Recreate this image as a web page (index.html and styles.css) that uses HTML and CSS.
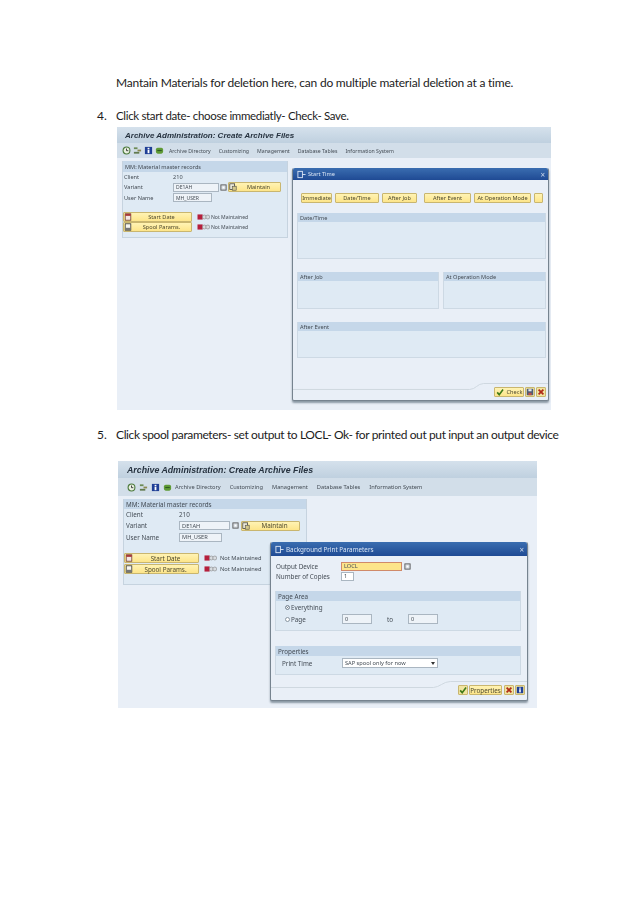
FILE: index.html
```html
<!DOCTYPE html>
<html lang="en">
<head>
<meta charset="utf-8">
<title>Archive Administration notes</title>
<link rel="stylesheet" href="styles.css">
</head>
<body>
<svg class="defs" width="0" height="0" aria-hidden="true">
  <symbol id="i-clock" viewBox="0 0 10 10"><circle cx="5" cy="5" r="3.8" fill="#e8efe0" stroke="#4c7a3c" stroke-width="1.2"/><path d="M5 2.8V5.2H7" fill="none" stroke="#333" stroke-width="1"/></symbol>
  <symbol id="i-tree" viewBox="0 0 10 10"><rect x="1" y="1.5" width="4" height="2" fill="#6d8a55"/><rect x="5" y="4" width="4" height="2" fill="#8c8a50"/><rect x="1" y="6.5" width="6" height="2" fill="#62794e"/></symbol>
  <symbol id="i-info" viewBox="0 0 10 10"><rect x="1" y="1" width="8" height="8" fill="#1f3f96"/><rect x="4" y="2" width="2" height="1.4" fill="#fff"/><rect x="4" y="4" width="2" height="4" fill="#fff"/></symbol>
  <symbol id="i-db" viewBox="0 0 10 10"><rect x="1" y="2" width="8" height="6.5" rx="2" fill="#5f9a35"/><rect x="2.5" y="4.4" width="5" height="1.2" fill="#2e5a20"/></symbol>
  <symbol id="i-cal" viewBox="0 0 10 10"><rect x="1.5" y="1" width="7" height="8" fill="#f3e8e4" stroke="#6b3a34"/><rect x="1.5" y="1" width="7" height="2.6" fill="#a83a3a"/></symbol>
  <symbol id="i-page" viewBox="0 0 10 10"><rect x="1.5" y="1" width="7" height="8" fill="#f6f6f0" stroke="#333"/><rect x="1.5" y="6" width="7" height="3" fill="#777"/></symbol>
  <symbol id="i-status" viewBox="0 0 15 7"><rect x="0.5" y="0.5" width="6" height="6" fill="#b51f3c"/><circle cx="8.5" cy="3.5" r="2.3" fill="#d8dce0" stroke="#777" stroke-width=".6"/><circle cx="12.5" cy="3.5" r="2.3" fill="#d8dce0" stroke="#777" stroke-width=".6"/></symbol>
  <symbol id="i-match" viewBox="0 0 8 8"><rect x="1" y="1" width="6" height="6" fill="#d6dce2" stroke="#555"/><rect x="3" y="3" width="2" height="2" fill="#fff"/></symbol>
  <symbol id="i-variant" viewBox="0 0 10 10"><rect x="1" y="1" width="6" height="7" fill="#f1efe0" stroke="#444"/><rect x="4" y="4" width="5" height="5" fill="#d4c88a" stroke="#444" stroke-width=".7"/></symbol>
  <symbol id="i-check" viewBox="0 0 10 10"><path d="M1.5 5.5L4 8.3L8.8 1.8" fill="none" stroke="#3f7a18" stroke-width="2"/></symbol>
  <symbol id="i-save" viewBox="0 0 10 10"><rect x="1" y="1" width="8" height="8" fill="#4d5d78"/><rect x="3" y="1.5" width="4" height="2.6" fill="#e5e8ee"/><rect x="3" y="6" width="4" height="3" fill="#b9504a"/></symbol>
  <symbol id="i-x" viewBox="0 0 10 10"><path d="M2 2L8 8M8 2L2 8" stroke="#b02a18" stroke-width="2.2"/></symbol>
  <symbol id="i-dlg" viewBox="0 0 10 10"><rect x="1" y="1.5" width="5" height="7" fill="none" stroke="#dce6f5"/><path d="M6 5H9.5" stroke="#dce6f5"/></symbol>
</svg>

<main class="page">
  <p class="intro">Mantain Materials for deletion here, can do multiple material deletion at a time.</p>

  <p class="step step-four"><span class="num">4.</span><span>Click start date- choose immediatly- Check- Save.</span></p>

  <section class="screen screen-a">
    <header class="title">Archive Administration: Create Archive Files</header>
    <nav class="toolbar">
      <span class="tools">
        <svg class="ico"><use href="#i-clock"/></svg><svg class="ico"><use href="#i-tree"/></svg><svg class="ico"><use href="#i-info"/></svg><svg class="ico"><use href="#i-db"/></svg>
      </span>
      <span>Archive Directory</span><span>Customizing</span><span>Management</span><span>Database Tables</span><span>Information System</span>
    </nav>
    <div class="work">
      <section class="panel">
        <h3 class="group-head">MM: Material master records</h3>
        <div class="fields">
          <div class="row"><span class="lab">Client</span><span>210</span></div>
          <div class="row"><span class="lab">Variant</span><span class="input in-variant">DE1AH</span><svg class="match"><use href="#i-match"/></svg><span class="btn btn-maintain"><svg class="ico"><use href="#i-variant"/></svg><b>Maintain</b></span></div>
          <div class="row"><span class="lab">User Name</span><span class="input in-user">MH_USER</span></div>
        </div>
        <div class="actions">
          <div class="row"><span class="btn btn-action"><svg class="ico"><use href="#i-cal"/></svg><b>Start Date</b></span><svg class="status"><use href="#i-status"/></svg><span>Not Maintained</span></div>
          <div class="row"><span class="btn btn-action"><svg class="ico"><use href="#i-page"/></svg><b>Spool Params.</b></span><svg class="status"><use href="#i-status"/></svg><span>Not Maintained</span></div>
        </div>
      </section>
    </div>

    <section class="dialog dialog-a">
      <header class="dlg-title"><svg class="ico"><use href="#i-dlg"/></svg><span>Start Time</span><i class="dlg-close">×</i></header>
      <div class="dlg-body">
        <div class="btn-row">
          <span class="btn b-imm">Immediate</span><span class="btn b-date">Date/Time</span><span class="btn b-job">After Job</span><span class="btn b-event">After Event</span><span class="btn b-mode">At Operation Mode</span><span class="btn b-blank"></span>
        </div>
        <section class="box box-date"><h4 class="group-head">Date/Time</h4></section>
        <div class="box-pair">
          <section class="box box-job"><h4 class="group-head">After Job</h4></section>
          <section class="box box-job"><h4 class="group-head">At Operation Mode</h4></section>
        </div>
        <section class="box box-event"><h4 class="group-head">After Event</h4></section>
      </div>
      <footer class="dlg-foot">
        <svg class="foot-line" viewBox="0 0 257 8" aria-hidden="true"><path d="M0 6.5H178C184 6.5 186 .5 192 .5H257" fill="none" stroke="#cfd8e0"/></svg>
        <span class="btn btn-check"><svg class="ico"><use href="#i-check"/></svg>Check</span>
        <span class="btn btn-icon"><svg class="ico"><use href="#i-save"/></svg></span>
        <span class="btn btn-icon"><svg class="ico"><use href="#i-x"/></svg></span>
      </footer>
    </section>
  </section>

  <p class="step step-five"><span class="num">5.</span><span>Click spool parameters- set output to LOCL- Ok- for printed out put input an output device</span></p>

  <section class="screen screen-b">
    <header class="title">Archive Administration: Create Archive Files</header>
    <nav class="toolbar">
      <span class="tools">
        <svg class="ico"><use href="#i-clock"/></svg><svg class="ico"><use href="#i-tree"/></svg><svg class="ico"><use href="#i-info"/></svg><svg class="ico"><use href="#i-db"/></svg>
      </span>
      <span>Archive Directory</span><span>Customizing</span><span>Management</span><span>Database Tables</span><span>Information System</span>
    </nav>
    <div class="work">
      <section class="panel">
        <h3 class="group-head">MM: Material master records</h3>
        <div class="fields">
          <div class="row"><span class="lab">Client</span><span>210</span></div>
          <div class="row"><span class="lab">Variant</span><span class="input in-variant">DE1AH</span><svg class="match"><use href="#i-match"/></svg><span class="btn btn-maintain"><svg class="ico"><use href="#i-variant"/></svg><b>Maintain</b></span></div>
          <div class="row"><span class="lab">User Name</span><span class="input in-user">MH_USER</span></div>
        </div>
        <div class="actions">
          <div class="row"><span class="btn btn-action"><svg class="ico"><use href="#i-cal"/></svg><b>Start Date</b></span><svg class="status"><use href="#i-status"/></svg><span>Not Maintained</span></div>
          <div class="row"><span class="btn btn-action"><svg class="ico"><use href="#i-page"/></svg><b>Spool Params.</b></span><svg class="status"><use href="#i-status"/></svg><span>Not Maintained</span></div>
        </div>
      </section>
    </div>

    <section class="dialog dialog-b">
      <header class="dlg-title"><svg class="ico"><use href="#i-dlg"/></svg><span>Background Print Parameters</span><i class="dlg-close">×</i></header>
      <div class="dlg-body">
        <div class="form-row"><span class="dlab">Output Device</span><span class="input in-locl">LOCL</span><svg class="match"><use href="#i-match"/></svg></div>
        <div class="form-row"><span class="dlab">Number of Copies</span><span class="input in-copies">1</span></div>
        <section class="box box-area">
          <h4 class="group-head">Page Area</h4>
          <div class="radio-row"><span class="radio on"></span><span>Everything</span></div>
          <div class="radio-row"><span class="radio"></span><span class="page-lab">Page</span><span class="input in-page">0</span><span class="to">to</span><span class="input in-page">0</span></div>
        </section>
        <section class="box box-props">
          <h4 class="group-head">Properties</h4>
          <div class="props-row"><span class="dlab">Print Time</span><span class="input in-select">SAP spool only for now<i class="caret"></i></span></div>
        </section>
      </div>
      <footer class="dlg-foot">
        <svg class="foot-line" viewBox="0 0 257 8" aria-hidden="true"><path d="M0 6.5H163C169 6.5 173 .5 180 .5H257" fill="none" stroke="#cfd8e0"/></svg>
        <span class="btn btn-icon"><svg class="ico"><use href="#i-check"/></svg></span>
        <span class="btn btn-props">Properties</span>
        <span class="btn btn-icon"><svg class="ico"><use href="#i-x"/></svg></span>
        <span class="btn btn-icon"><svg class="ico"><use href="#i-info"/></svg></span>
      </footer>
    </section>
  </section>
</main>
</body>
</html>
```

FILE: styles.css
```css
* { box-sizing: border-box; }
html, body { margin: 0; padding: 0; background: #fff; }
.defs { position: absolute; }
.page { width: 638px; height: 902px; overflow: hidden; padding-top: 75px; font-family: Lato, "Open Sans", sans-serif; color: #1c1c1c; font-size: 12px; letter-spacing: -.22px; font-variant-ligatures: none; }
p { margin: 0; line-height: 16px; }
.intro { margin-left: 116px; }
.step { display: flex; margin-left: 97px; }
.num { width: 19px; letter-spacing: 0; font-size: 12px; flex: none; }
.step-four { margin-top: 17px; font-size: 11.5px; letter-spacing: -.34px; }
.step-five { margin-top: 17px; letter-spacing: -.38px; }

.screen { position: relative; display: flex; flex-direction: column; background: #e9eff7; color: #444c55; font-family: "Noto Sans", sans-serif; letter-spacing: 0; filter: blur(.65px); }
.screen-a { width: 434px; height: 283px; margin: 3px 0 0 117px; font-size: 5.6px; }
.screen-b { width: 419px; height: 247px; margin: 18px 0 0 118px; font-size: 6.3px; }

.title { background: linear-gradient(#d5e1ec, #bfd0df); color: #26323f; font: italic bold 8px "Liberation Sans", sans-serif; display: flex; align-items: center; padding-left: 8px; }
.screen-a .title { height: 16px; }
.screen-b .title { height: 17px; padding-left: 9px; font-size: 8.8px; }

.toolbar { display: flex; align-items: center; background: #d2dee9; }
.screen-a .toolbar { height: 15px; padding-left: 5px; gap: 8px; font-size: 5.2px; }
.screen-b .toolbar { height: 18px; padding-left: 9px; gap: 9px; font-size: 5.7px; }
.tools { display: flex; gap: 2px; margin-right: -3px; }
.ico { width: 9px; height: 9px; flex: none; display: block; }
.screen-b .tools { gap: 3px; margin-right: -6px; }

.work { flex: 1; padding: 3px 0 0 5px; }
.panel { background: #dfeaf4; border: 1px solid #c6d3df; border-top: 0; }
.screen-a .panel { width: 166px; height: 77px; }
.screen-b .panel { width: 184px; height: 86px; }
.group-head { margin: 0; font-weight: 400; font-size: inherit; background: #c5d7e9; display: flex; align-items: center; padding-left: 2px; height: 10px; }
.screen-a .panel .group-head { height: 11px; }
.fields { display: flex; flex-direction: column; padding-left: 1px; }
.screen-a .fields { gap: 1px; padding-top: 0; }
.screen-b .fields { gap: 2px; padding: .5px 0 0 2px; }
.row { display: flex; align-items: center; height: 9.5px; }
.lab { flex: none; }
.screen-a .lab { width: 49px; }
.screen-b .lab { width: 53px; }
.input { background: #eef3f8; border: 1px solid #aab6c1; display: flex; align-items: center; padding-left: 2px; flex: none; height: 9px; font-size: 90%; }
.screen-a .in-variant { width: 46px; }
.screen-a .in-user { width: 39px; }
.screen-b .in-variant { width: 51px; }
.screen-b .in-user { width: 43px; }
.match { width: 7px; height: 7px; flex: none; margin-left: 2px; }
.screen-a .match { margin-left: 1px; }
.btn { display: flex; align-items: center; justify-content: center; flex: none; background: linear-gradient(#fff3b4, #fde58a); border: 1px solid #c9b66f; border-radius: 1px; height: 10px; color: #4e4a30; font-size: inherit; }
.btn b { font-weight: 400; flex: 1; text-align: center; }
.btn .ico { width: 8px; height: 8px; }
.screen-a .btn-maintain { width: 53px; margin-left: 1px; }
.screen-b .btn-maintain { width: 59px; margin-left: 2px; }
.actions { display: flex; flex-direction: column; gap: .5px; }
.screen-a .actions { padding-top: 10px; font-size: 5.1px; }
.screen-b .actions { padding-top: 11.5px; gap: 1.5px; font-size: 5.7px; }
.screen-a .btn-action { width: 69px; font-size: 5.6px; }
.screen-b .btn-action { width: 75px; font-size: 6.3px; }
.status { width: 13px; height: 6px; flex: none; margin: 0 1px 0 5px; }
.screen-b .status { margin-right: 3px; }

.dialog { position: absolute; display: flex; flex-direction: column; background: #e9eff7; border: 1px solid #76838f; border-top: 0; box-shadow: 0 2px 2px #8b98a4; border-radius: 2px; }
.dialog-a { left: 175px; top: 41px; width: 257px; height: 233px; }
.dialog-b { left: 152px; top: 81px; width: 258px; height: 159px; }
.dlg-title { display: flex; align-items: center; gap: 2px; padding-left: 4px; background: linear-gradient(#3a6db0, #1f4a94); color: #d8e4f4; border-radius: 2px 2px 0 0; }
.dialog-a .dlg-title { height: 12px; }
.dialog-b .dlg-title { height: 14px; }
.dlg-close { margin-left: auto; margin-right: 3px; font-style: normal; font-size: 8px; color: #c9d6ea; }
.dlg-body { flex: 1; display: flex; flex-direction: column; padding-left: 4px; padding-right: 2px; }
.dialog-b .dlg-body { padding-right: 6px; }
.btn-row { display: flex; padding: 13px 0 0 4px; gap: 3px; }
.b-imm { width: 31px; }
.b-date { width: 44px; }
.b-job { width: 35px; margin-right: 4px; }
.b-event { width: 47px; }
.b-mode { width: 57px; }
.b-blank { width: 9px; }
.box { background: #dfeaf4; border: 1px solid #cdd9e4; border-top: 0; }
.box .group-head { height: 9px; }
.box-date { height: 46px; margin-top: 10px; }
.box-pair { display: grid; grid-template-columns: 142px 1fr; gap: 4px; margin-top: 13px; }
.box-job { height: 37px; }
.box-event { height: 36px; margin-top: 13px; }
.dlg-foot { position: relative; display: flex; justify-content: flex-end; align-items: center; gap: 1px; }
.dialog-a .dlg-foot { height: 17px; padding: 4px 2px 3px 0; }
.dialog-b .dlg-foot { height: 19px; padding: 4px 2px 5px 0; gap: 1.5px; }
.foot-line { position: absolute; left: 0; top: 0; width: 100%; height: 8px; }
.btn-check { width: 30px; gap: 3px; }
.btn-icon { width: 10px; background: #f0e4a0; }
.btn-props { width: 33px; }

.form-row { display: flex; align-items: center; height: 10px; padding-left: 1px; }
.form-row:first-child { margin-top: 5px; }
.dlab { width: 65px; flex: none; }
.in-locl { width: 61px; height: 9px; background: #fde58a; border-color: #d08a6a; }
.in-copies { width: 13px; height: 9px; background: #fff; }
.box-area { height: 40px; margin-top: 10px; }
.box-area .group-head, .box-props .group-head { height: 10px; }
.radio-row { display: flex; align-items: center; height: 12px; padding-left: 9px; }
.radio { width: 5px; height: 5px; border-radius: 50%; background: #fff; border: 1px solid #8a97a3; margin-right: 1px; flex: none; }
.radio.on { background: #46586a; box-shadow: inset 0 0 0 1px #fff; }
.page-lab { width: 51px; }
.in-page { width: 30px; height: 10px; }
.to { width: 36px; text-align: center; }
.box-props { height: 29px; margin-top: 15px; }
.props-row { display: flex; align-items: center; padding: 2px 0 0 6px; }
.props-row .dlab { width: 60px; }
.in-select { width: 96px; height: 10px; background: #fff; justify-content: space-between; padding-right: 2px; }
.caret { width: 0; height: 0; border: 2px solid transparent; border-top: 3px solid #333; border-bottom: 0; }
```
